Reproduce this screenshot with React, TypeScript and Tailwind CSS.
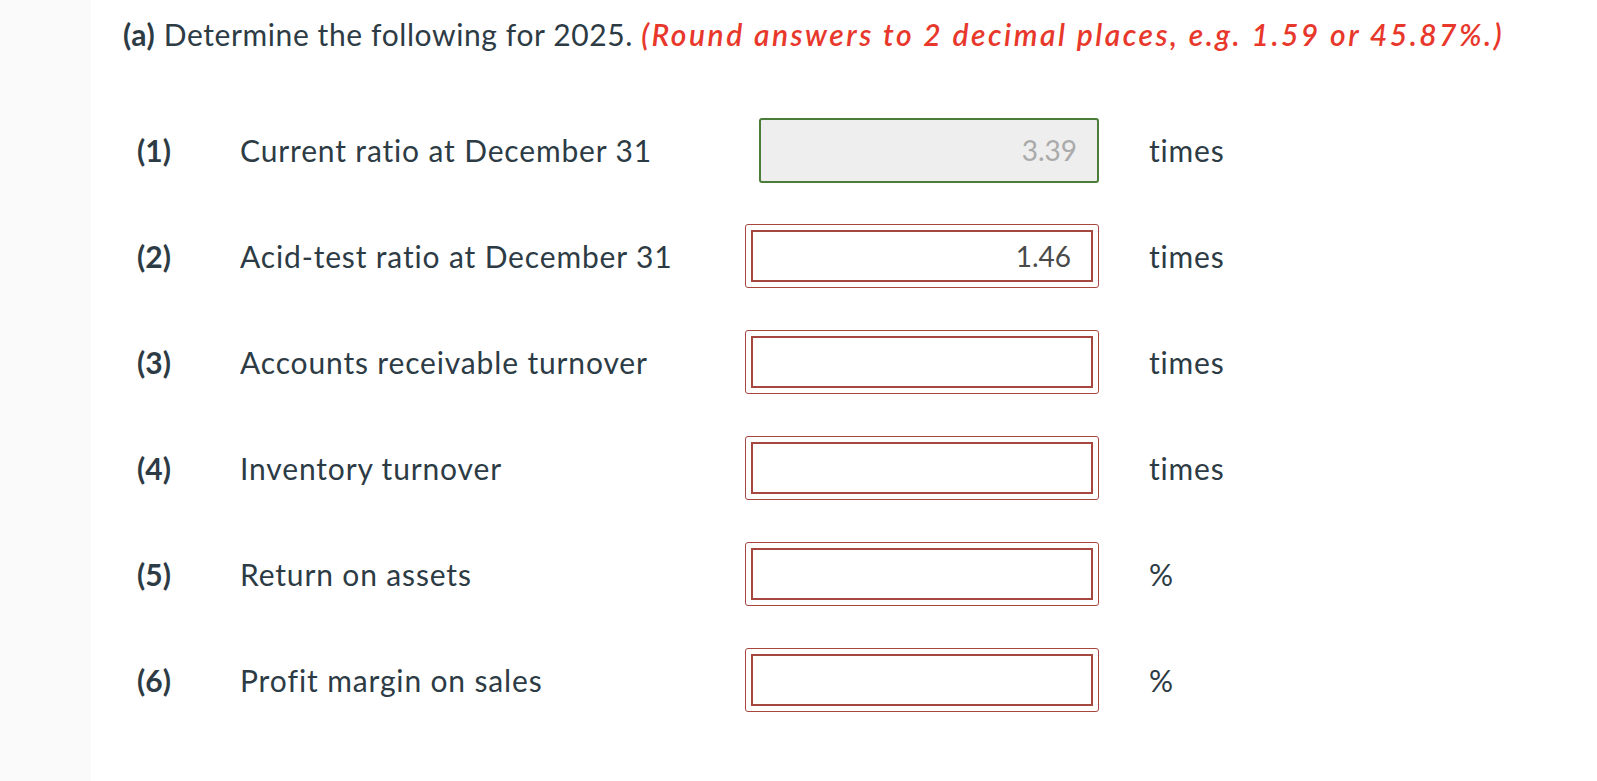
import React from "react";

const rows: { n: string; label: React.ReactNode; value?: string; unit: string; ok?: boolean }[] = [
  { n: "(1)", label: "Current ratio at December 31", value: "3.39", unit: "times", ok: true },
  { n: "(2)", label: "Acid-test ratio at December 31", value: "1.46", unit: "times" },
  { n: "(3)", label: "Accounts receivable turnover", value: "", unit: "times" },
  { n: "(4)", label: "Inventory turnover", value: "", unit: "times" },
  { n: "(5)", label: "Return on assets", value: "", unit: "%" },
  {
    n: "(6)",
    label: (
      <>
        Pro<span className="[font-variant-ligatures:common-ligatures]">fi</span>t margin on sales
      </>
    ),
    value: "",
    unit: "%",
  },
];

export default function App() {
  return (
    <div
      className="flex h-[781px] w-full bg-white text-[#2d3b45] [font-variant-ligatures:none]"
      style={{ fontFamily: "Lato, 'Open Sans', sans-serif" }}
    >
      <div className="w-[91px] shrink-0 bg-[#fafafa]" />
      <div className="flex flex-1 flex-col">
        <h1 className="pl-[32px] pt-[16px] text-[30px] font-normal leading-[36px] tracking-[0.6px] whitespace-nowrap">
          <span className="font-bold">(a)</span> Determine the following for 2025.{" "}
          <span className="font-semibold italic tracking-[2.5px] text-[#e8382b]">
            (Round answers to 2 decimal places, e.g. 1.59 or 45.87%.)
          </span>
        </h1>
        <div className="mt-[45px] flex flex-col">
          {rows.map((r) => (
            <div key={r.n} className="flex h-[106px] items-center">
              <div className="w-[103px] pl-[46px] box-content text-[30px] font-bold">{r.n}</div>
              <div className="w-[505px] text-[30px] tracking-[0.85px]">{r.label}</div>
              <div className="flex w-[354px] justify-end">
                {r.ok ? (
                  <div className="flex h-[65px] w-[340px] items-center justify-end rounded-[3px] border-2 border-[#4b7d39] bg-[#eeeeee] pr-[20px] text-[28px] text-[#aaaaaa]">
                    {r.value}
                  </div>
                ) : (
                  <div className="flex h-[64px] w-[354px] items-center rounded-[3px] border border-[#a5463f] p-[5px]">
                    <div className="flex h-full w-full items-center justify-end border-2 border-[#a5463f] pr-[20px] text-[28px] text-[#4a4a4a]">
                      {r.value}
                    </div>
                  </div>
                )}
              </div>
              <div className="pl-[50px] text-[30px] tracking-[0.8px]">{r.unit}</div>
            </div>
          ))}
        </div>
      </div>
    </div>
  );
}
